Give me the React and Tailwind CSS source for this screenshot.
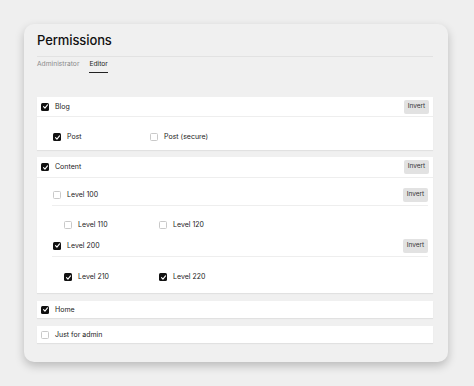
import React from "react";

const font = { fontFamily: "Inter, 'Noto Sans', sans-serif" };

function Box({ checked }) {
  if (checked) {
    return (
      <span className="flex h-[8px] w-[8px] shrink-0 items-center justify-center rounded-[1.5px] bg-[#111]">
        <svg viewBox="0 0 10 10" className="h-[7px] w-[7px]">
          <path d="M2.2 5.2 L4.2 7.3 L7.9 2.6" fill="none" stroke="#fff" strokeWidth="1.6" strokeLinecap="round" strokeLinejoin="round" />
        </svg>
      </span>
    );
  }
  return <span className="h-[8px] w-[8px] shrink-0 rounded-[1.5px] border border-[#c9c9c9] bg-white" />;
}

function Check({ label, checked }) {
  return (
    <div className="flex h-[10px] items-center gap-[6px] text-[7px] leading-[10px] text-[#222]">
      <Box checked={checked} />
      <span>{label}</span>
    </div>
  );
}

function Invert() {
  return (
    <button className="flex h-[14px] w-[25px] items-center justify-center rounded-[2px] bg-[#e2e2e2] text-[6.5px] text-[#333]">
      Invert
    </button>
  );
}

function Pair({ a, b, w }) {
  return (
    <div className="flex">
      <div className={w}>
        <Check label={a[0]} checked={a[1]} />
      </div>
      <Check label={b[0]} checked={b[1]} />
    </div>
  );
}

export default function App() {
  return (
    <div className="h-[386px] w-[474px] bg-[#efefef] pl-[24px] pt-[24px]" style={font}>
      <div className="h-[338px] w-[424px] rounded-[10px] bg-[#f0f0f0] pl-[13px] pr-[15px] pt-[6px] shadow-[0_4px_10px_rgba(0,0,0,0.22)]">
        {/* header */}
        <h1 className="h-[20px] text-[13px] font-medium leading-[20px] tracking-[-0.1px] text-[#111]">Permissions</h1>
        <div className="mt-[6px] border-t border-[#e2e2e2]" />
        <div className="flex gap-[10px] pt-[3px] text-[6.7px] leading-[9px]">
          <span className="pb-[3px] text-[#8a8a8a]">Administrator</span>
          <span className="border-b border-[#222] pb-[3px] text-[#222]">Editor</span>
        </div>

        <div className="mt-[24px] flex flex-col">
          {/* Blog */}
          <div className="bg-white shadow-[0_1px_1px_rgba(0,0,0,0.06)]">
            <div className="flex h-[19px] items-center justify-between px-[4px]">
              <Check label="Blog" checked />
              <Invert />
            </div>
            <div className="border-t border-[#eeeeee] pb-[8px] pl-[16px] pt-[15px]">
              <Pair w="w-[97px]" a={["Post", true]} b={["Post (secure)", false]} />
            </div>
          </div>

          {/* Content */}
          <div className="mt-[7px] bg-white shadow-[0_1px_1px_rgba(0,0,0,0.06)]">
            <div className="flex h-[20px] items-center justify-between px-[4px]">
              <Check label="Content" checked />
              <Invert />
            </div>
            <div className="border-t border-[#eeeeee] pb-[11px] pl-[15px] pr-[5px] pt-[6px]">
              <div className="flex h-[21px] items-center justify-between pl-[1px]">
                <Check label="Level 100" checked={false} />
                <Invert />
              </div>
              <div className="border-t border-[#eeeeee] pb-[5px] pl-[12px] pt-[14px]">
                <Pair w="w-[95px]" a={["Level 110", false]} b={["Level 120", false]} />
              </div>
              <div className="flex h-[21px] items-center justify-between pl-[1px]">
                <Check label="Level 200" checked />
                <Invert />
              </div>
              <div className="border-t border-[#eeeeee] pl-[12px] pt-[15px]">
                <Pair w="w-[95px]" a={["Level 210", true]} b={["Level 220", true]} />
              </div>
            </div>
          </div>

          {/* Home */}
          <div className="mt-[8px] flex h-[17px] items-center bg-white pl-[4px] shadow-[0_1px_1px_rgba(0,0,0,0.06)]">
            <Check label="Home" checked />
          </div>
          <div className="mt-[8px] flex h-[17px] items-center bg-white pl-[4px] shadow-[0_1px_1px_rgba(0,0,0,0.06)]">
            <Check label="Just for admin" checked={false} />
          </div>
        </div>
      </div>
    </div>
  );
}
